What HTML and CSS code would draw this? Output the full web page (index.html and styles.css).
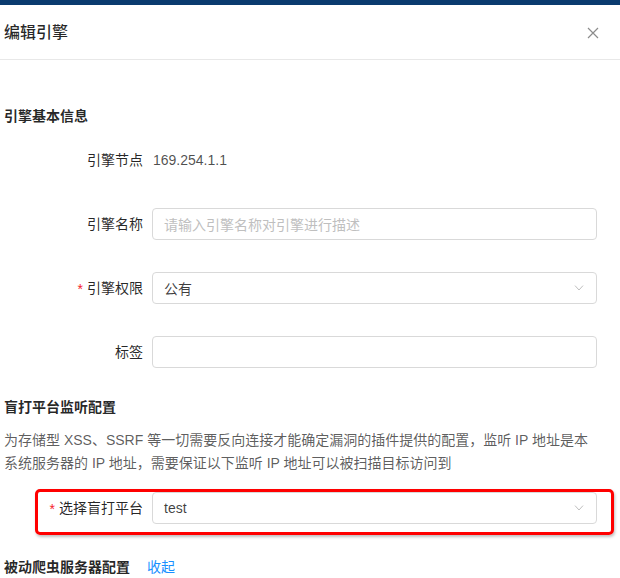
FILE: index.html
```html
<!DOCTYPE html>
<html lang="zh-CN">
<head>
<meta charset="utf-8">
<title>编辑引擎</title>
<link rel="stylesheet" href="styles.css">
</head>
<body>
<div class="topbar"></div>
<div class="header">
  <div class="title">编辑引擎</div>
  <svg class="close" width="12" height="12" viewBox="0 0 12 12"><path d="M1 1 L11 11 M11 1 L1 11" stroke="#8c8c8c" stroke-width="1.2" fill="none"/></svg>
</div>
<div class="content">
  <div class="section-title first">引擎基本信息</div>
  <div class="row">
    <div class="label">引擎节点</div>
    <div class="value">169.254.1.1</div>
  </div>
  <div class="row">
    <div class="label">引擎名称</div>
    <div class="control"><span class="placeholder">请输入引擎名称对引擎进行描述</span></div>
  </div>
  <div class="row">
    <div class="label"><span class="req">*</span>引擎权限</div>
    <div class="control select"><span class="text">公有</span>
      <svg class="arrow" width="10" height="6" viewBox="0 0 10 6"><path d="M1 0.6 L5 5 L9 0.6" stroke="#bfbfbf" stroke-width="1" fill="none"/></svg>
    </div>
  </div>
  <div class="row">
    <div class="label">标签</div>
    <div class="control"></div>
  </div>
  <div class="section-title second">盲打平台监听配置</div>
  <div class="desc">为存储型 XSS、SSRF 等一切需要反向连接才能确定漏洞的插件提供的配置，监听 IP 地址是本系统服务器的 IP 地址，需要保证以下监听 IP 地址可以被扫描目标访问到</div>
  <div class="row highlight">
    <div class="label"><span class="req">*</span>选择盲打平台</div>
    <div class="control select"><span class="text">test</span>
      <svg class="arrow" width="10" height="6" viewBox="0 0 10 6"><path d="M1 0.6 L5 5 L9 0.6" stroke="#bfbfbf" stroke-width="1" fill="none"/></svg>
    </div>
    <div class="redbox"></div>
  </div>
  <div class="section-title third">被动爬虫服务器配置<a class="toggle">收起</a></div>
</div>
</body>
</html>
```
FILE: styles.css
```css
* { box-sizing: border-box; }
html, body { margin: 0; padding: 0; background: #fff; }
body {
  width: 620px;
  height: 578px;
  overflow: hidden;
  font-family: "Liberation Sans", "Noto Sans CJK SC", sans-serif;
  font-size: 14px;
  color: rgba(0,0,0,0.85);
}
.topbar { height: 5px; background: #0a3b6f; }
.header {
  height: 55px;
  border-bottom: 1px solid #e8e8e8;
  display: flex;
  align-items: center;
  justify-content: space-between;
  padding: 0 21px 0 4px;
}
.title { font-size: 16px; font-weight: 500; color: rgba(0,0,0,0.85); line-height: 22px; margin-top: 2px; }
.close { display: block; margin-top: 2px; }
.content { padding: 0 23px 0 4px; }
.section-title {
  font-size: 14px;
  font-weight: 700;
  line-height: 22px;
  color: rgba(0,0,0,0.85);
  display: flex;
  align-items: center;
}
.section-title.first { margin-top: 45px; margin-bottom: 17px; }
.section-title.second { margin-top: -4px; margin-bottom: 11px; }
.section-title.third { margin-top: 32px; }
.toggle { color: #1890ff; font-weight: 400; margin-left: 17px; }
.row {
  display: flex;
  align-items: center;
  height: 32px;
  margin-bottom: 32px;
  position: relative;
}
.label {
  width: 139px;
  flex: none;
  text-align: right;
  padding-right: 0;
  line-height: 32px;
  color: rgba(0,0,0,0.85);
}
.req { color: #f5222d; margin-right: 4px; font-family: "Liberation Sans", sans-serif; font-size: 14px; position: relative; top: 1px; }
.value { margin-left: 10px; color: rgba(0,0,0,0.7); }
.control {
  margin-left: 9px;
  flex: 1;
  height: 32px;
  border: 1px solid #d9d9d9;
  border-radius: 4px;
  padding: 0 11px;
  display: flex;
  align-items: center;
  justify-content: space-between;
}
.placeholder { color: #bfbfbf; }
.text { color: rgba(0,0,0,0.75); }
.arrow { display: block; margin-right: 1px; }
.desc {
  line-height: 23px;
  color: rgba(0,0,0,0.65);
  margin-bottom: 17px;
  padding-right: 0;
}
.highlight { margin-bottom: 0; }
.redbox {
  position: absolute;
  left: 31px;
  top: -3px;
  right: -17px;
  bottom: -11px;
  border: 3px solid #ff0000;
  border-radius: 5px;
  box-shadow: 1px 2px 3px rgba(0,0,0,0.25);
  pointer-events: none;
}
```
